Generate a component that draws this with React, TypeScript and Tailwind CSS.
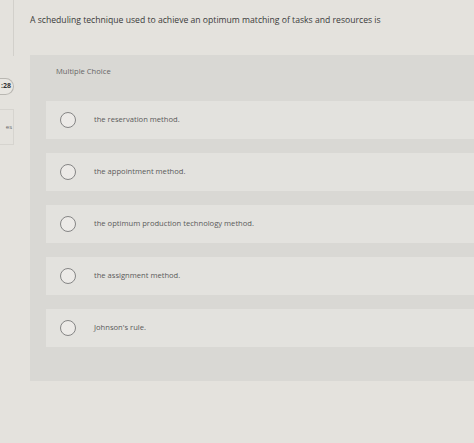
import React from "react";

const options = [
  "the reservation method.",
  "the appointment method.",
  "the optimum production technology method.",
  "the assignment method.",
  "Johnson's rule.",
];

export default function App() {
  return (
    <div
      className="flex h-[443px] w-[474px] overflow-hidden bg-[#e4e2dd] text-[#4a4a4a]"
      style={{ fontFamily: "'Open Sans', Lato, sans-serif" }}
    >
      <div className="flex w-[14px] shrink-0 flex-col overflow-hidden">
        <div className="h-[56px] border-r border-[#d2d0cb]" />
        <div className="mt-[22px] flex h-[17px] w-[14px] items-center justify-end rounded-r-full border border-l-0 border-[#b9b7b2] bg-[#e8e6e1] pr-[2px] text-[7px] font-bold text-[#333]">
          :28
        </div>
        <div className="mt-[14px] flex h-[36px] items-center justify-end border-y border-r border-[#d6d4cf] pr-[1px] text-[6px] text-[#666]">
          es
        </div>
      </div>
      <div className="flex min-w-0 flex-1 flex-col pl-[16px]">
        <p className="mt-[14px] h-[41px] whitespace-nowrap text-[8.65px] text-[#3a3a3a]">
          A scheduling technique used to achieve an optimum matching of tasks and resources is
        </p>
        <div className="flex h-[326px] flex-col bg-[#d9d8d4] pl-[16px]">
          <div className="h-[46px] pl-[10px] pt-[11px] text-[7.6px] text-[#666]">Multiple Choice</div>
          <div className="flex flex-col gap-[14px]">
            {options.map((o) => (
              <div key={o} className="flex h-[38px] items-center bg-[#e3e2de] pl-[14px]">
                <span className="h-[16px] w-[16px] shrink-0 rounded-full border border-[#858585] bg-[#eceae7]" />
                <span className="ml-[18px] text-[7.6px] text-[#5a5a5a]">{o}</span>
              </div>
            ))}
          </div>
        </div>
      </div>
    </div>
  );
}
